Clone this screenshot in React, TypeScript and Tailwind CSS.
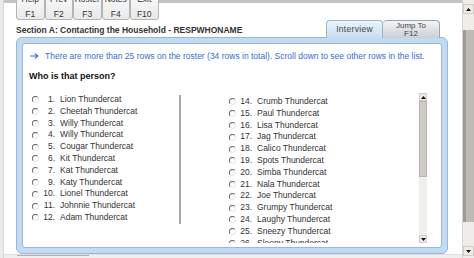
import React from "react";

const leftRows: [number, string][] = [
  [1, "Lion"],
  [2, "Cheetah"],
  [3, "Willy"],
  [4, "Willy"],
  [5, "Cougar"],
  [6, "Kit"],
  [7, "Kat"],
  [9, "Katy"],
  [10, "Lionel"],
  [11, "Johnnie"],
  [12, "Adam"],
];

const rightRows: [number, string][] = [
  [14, "Crumb"],
  [15, "Paul"],
  [16, "Lisa"],
  [17, "Jag"],
  [18, "Calico"],
  [19, "Spots"],
  [20, "Simba"],
  [21, "Nala"],
  [22, "Joe"],
  [23, "Grumpy"],
  [24, "Laughy"],
  [25, "Sneezy"],
  [26, "Sleepy"],
  [27, "Happy"],
  [28, "Bashful"],
];

const buttons = [
  ["Help", "F1"],
  ["Prev", "F2"],
  ["Roster", "F3"],
  ["Notes", "F4"],
  ["Exit", "F10"],
];

function Radio() {
  return (
    <svg width="7" height="7" viewBox="0 0 8 8" className="shrink-0">
      <circle cx="4" cy="4" r="3.4" fill="#fff" />
      <path d="M6.6 1.6 A3.4 3.4 0 0 0 1.4 6.4" stroke="#6e6e6e" strokeWidth="1.2" fill="none" />
      <path d="M1.4 6.4 A3.4 3.4 0 0 0 6.6 1.6" stroke="#dcdcdc" strokeWidth="1" fill="none" />
    </svg>
  );
}

function Row({ n, name }: { n: number; name: string }) {
  return (
    <div className="flex items-center h-[11.8px] leading-[11.8px] text-[8.5px] text-[#333]">
      <Radio />
      <span className="w-[13px] ml-[3px] text-right">{n}.</span>
      <span className="ml-[5px] whitespace-nowrap">{name} Thundercat</span>
    </div>
  );
}

function Arrow({ up, big }: { up?: boolean; big?: boolean }) {
  return (
    <div
      className={`flex items-center justify-center bg-[#ecebe8] border border-[#d0cec8] ${
        big ? "h-[10px]" : "h-[8px]"
      }`}
    >
      <svg width="5" height="3" viewBox="0 0 5 3">
        <path d={up ? "M0 3 L2.5 0 L5 3 Z" : "M0 0 L2.5 3 L5 0 Z"} fill="#111" />
      </svg>
    </div>
  );
}

export default function App() {
  return (
    <div className="flex w-[474px] h-[258px] overflow-hidden bg-white font-['Liberation_Sans',Arial,sans-serif]">
      {/* left edge */}
      <div className="w-[4px] bg-[#ebebeb] border-r border-[#d8d8d8]" />

      <div className="flex-1 flex flex-col">
        {/* toolbar */}
        <div className="flex h-[20px] border-t-[3px] border-[#c4c4c4] bg-white pl-[12px]">
          {buttons.map(([label, key]) => (
            <div
              key={key}
              className="relative -mt-[16px] h-[33px] w-[28.5px] pt-[5px] border border-[#b4b4b4] rounded-b-[3px] bg-gradient-to-b from-[#ffffff] to-[#e9e9e9] text-center text-[8.5px] leading-[12px] text-[#333]"
            >
              <div>{label}</div>
              <div className="mt-[3px]">{key}</div>
            </div>
          ))}
        </div>

        {/* title + tabs */}
        <div className="flex items-end justify-between pl-[12px] pr-[22px] mb-[-1px]">
          <div className="pb-[2px] text-[8.5px] leading-[12px] font-bold text-[#333] font-['Liberation_Sans_Narrow','Liberation_Sans',sans-serif]">
            Section A: Contacting the Household - RESPWHONAME
          </div>
          <div className="flex relative">
            <div className="w-[57px] h-[18px] border border-b-0 border-[#97b6d4] rounded-t-[4px] bg-gradient-to-b from-[#eef5fc] to-[#c6dcf1] flex items-center justify-center text-[8.5px] tracking-[0.3px] text-[#444]">
              Interview
            </div>
            <div className="w-[57px] h-[18px] border border-b-0 border-l-0 border-[#9aa6b2] rounded-t-[4px] bg-gradient-to-b from-[#f4f4f4] to-[#c9d0d8] flex flex-col items-center justify-center pt-[1px] text-[8px] leading-[8.5px] text-[#444]">
              <span>Jump To</span>
              <span>F12</span>
            </div>
          </div>
        </div>

        {/* panel */}
        <div className="ml-[12px] mr-[14px] h-[217px] rounded-[6px] border border-[#98b8d8] bg-[#c3dbf1] p-[5px]">
          <div className="h-full bg-white border border-[#9bb9d7] rounded-[3px] px-[6px] pt-[6px]">
            <div className="flex items-center h-[12px] text-[8.5px] leading-[12px] text-[#3b6cd3] whitespace-nowrap">
              <svg width="9" height="6" viewBox="0 0 9 6" className="mr-[6px] ml-[1px]">
                <path d="M0 3 H7.5 M5 0.7 L7.8 3 L5 5.3" stroke="#3b6cd3" strokeWidth="1.1" fill="none" />
              </svg>
              There are more than 25 rows on the roster (34 rows in total). Scroll down to see other rows in the list.
            </div>
            <div className="mt-[8px] h-[12px] text-[9px] leading-[12px] font-bold text-[#111]">
              Who is that person?
            </div>

            <div className="flex mt-[12px]">
              <div className="w-[150px] pl-[3px]">
                {leftRows.map(([n, name]) => (
                  <Row key={n} n={n} name={name} />
                ))}
              </div>
              <div className="w-[2px] h-[129px] mt-[1px] bg-[#a9a9a9]" />
              <div className="ml-[46px] w-[200px] h-[150px] -mt-[1px] flex">
                <div className="flex-1 overflow-hidden pl-[2px] pt-[3px]">
                  {rightRows.map(([n, name]) => (
                    <Row key={n} n={n} name={name} />
                  ))}
                </div>
                <div className="w-[9px] flex flex-col bg-[#f0efec] border-l border-[#fafafa]">
                  <Arrow up />
                  <div className="h-[76px] bg-[#cfccc5] border border-[#b9b6ae]" />
                  <div className="flex-1" />
                  <Arrow />
                </div>
              </div>
            </div>
          </div>
        </div>

        {/* bottom strip */}
        <div className="flex-1 bg-[#efefef] border-t border-[#e0e0e0] pl-[13px]">
          <div className="w-[72px] h-[1px] bg-[#b0b0b0]" />
        </div>
      </div>

      {/* page scrollbar */}
      <div className="w-[12px] flex flex-col bg-[#eeede9] border-l border-[#d6d6d6] pt-[4px] pb-[2px]">
        <Arrow up big />
        <div className="h-[16px]" />
        <div className="h-[192px] bg-[#bdbab3] border-l-[3px] border-[#9e9b94]" />
        <div className="flex-1" />
        <Arrow big />
      </div>
    </div>
  );
}
